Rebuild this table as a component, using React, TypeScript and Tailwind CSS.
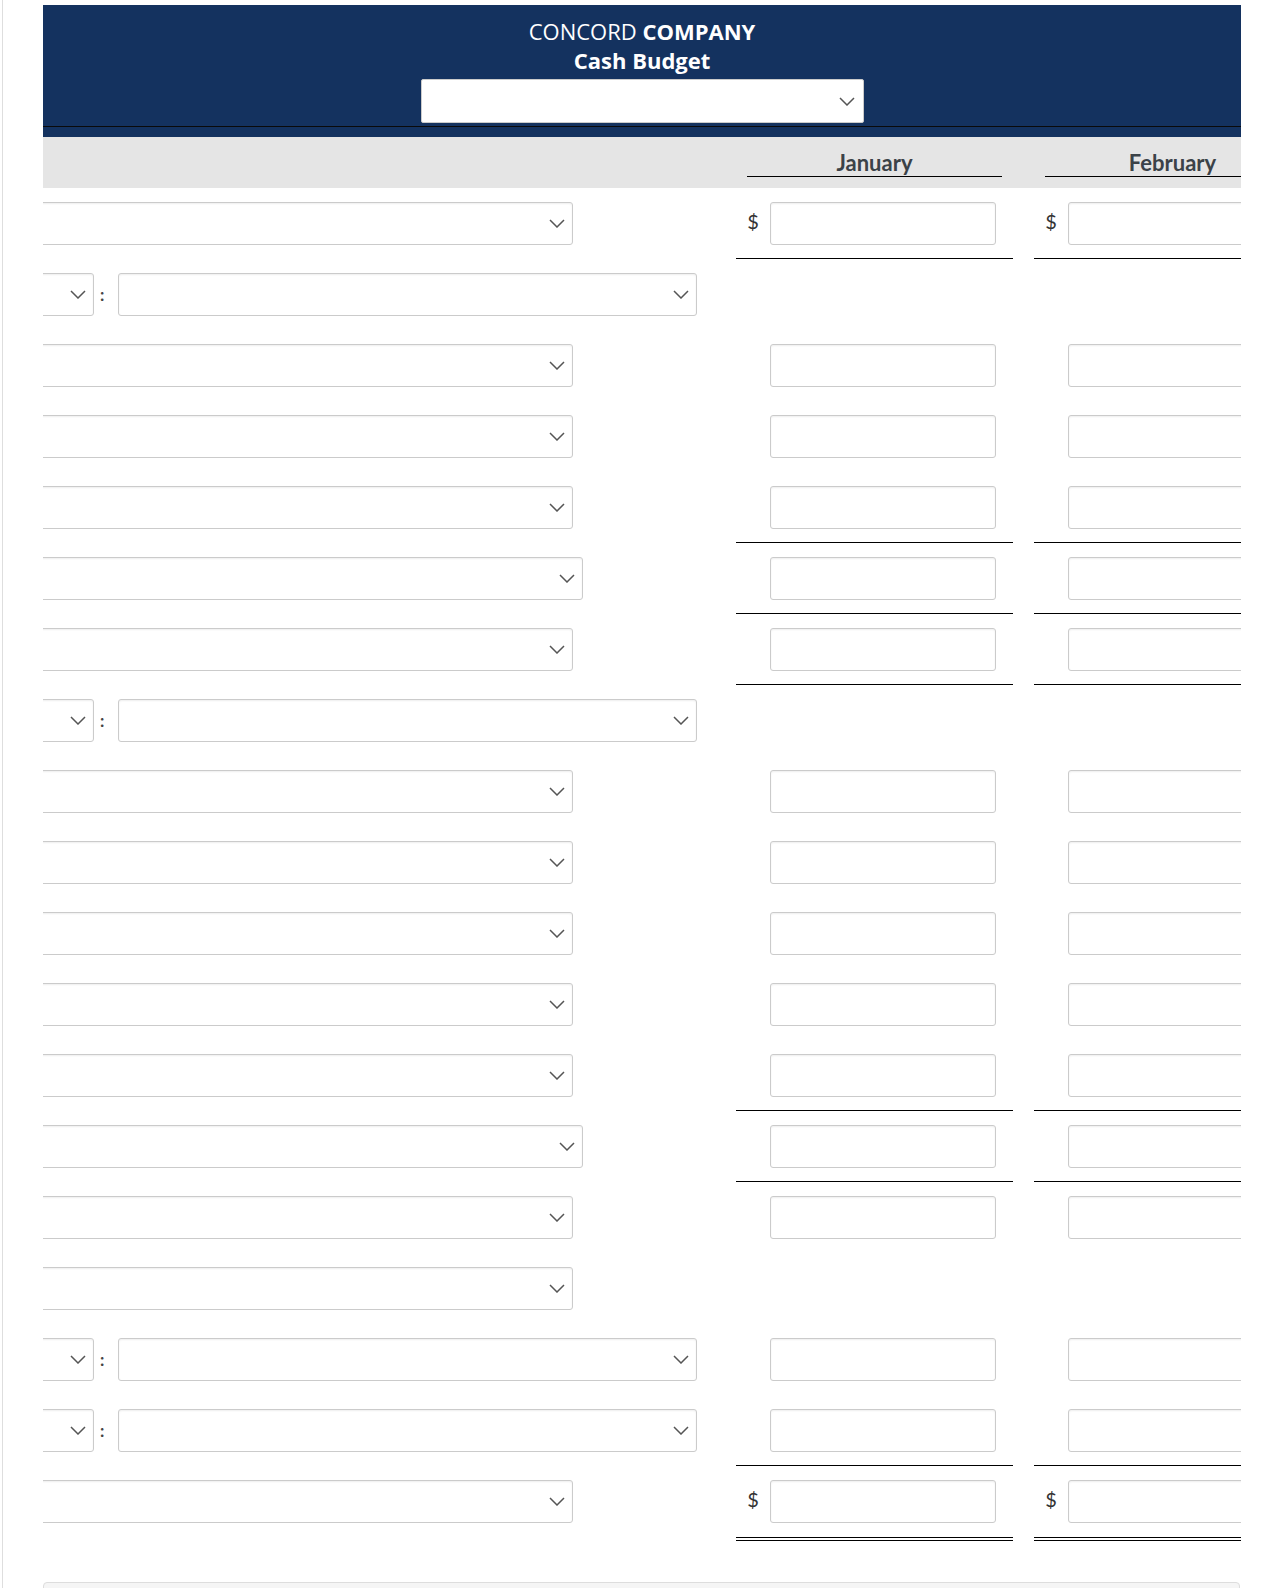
import React from 'react';

type Left = 'sel' | 'wide' | 'pair';
type Vals = 'none' | 'input' | 'dollar';
type Line = 'none' | 'single' | 'double';

interface Row {
  left: Left;
  vals: Vals;
  line: Line;
}

const rows: Row[] = [
  { left: 'sel', vals: 'dollar', line: 'single' },
  { left: 'pair', vals: 'none', line: 'none' },
  { left: 'sel', vals: 'input', line: 'none' },
  { left: 'sel', vals: 'input', line: 'none' },
  { left: 'sel', vals: 'input', line: 'single' },
  { left: 'wide', vals: 'input', line: 'single' },
  { left: 'sel', vals: 'input', line: 'single' },
  { left: 'pair', vals: 'none', line: 'none' },
  { left: 'sel', vals: 'input', line: 'none' },
  { left: 'sel', vals: 'input', line: 'none' },
  { left: 'sel', vals: 'input', line: 'none' },
  { left: 'sel', vals: 'input', line: 'none' },
  { left: 'sel', vals: 'input', line: 'single' },
  { left: 'wide', vals: 'input', line: 'single' },
  { left: 'sel', vals: 'input', line: 'none' },
  { left: 'sel', vals: 'none', line: 'none' },
  { left: 'pair', vals: 'input', line: 'none' },
  { left: 'pair', vals: 'input', line: 'single' },
  { left: 'sel', vals: 'dollar', line: 'double' },
];

function Chevron() {
  return (
    <svg width="16" height="9" viewBox="0 0 16 9" fill="none">
      <path d="M1 1l7 7 7-7" stroke="#555" strokeWidth="1.5" />
    </svg>
  );
}

function Select({ className }: { className: string }) {
  return (
    <div
      className={
        'flex h-[43px] shrink-0 items-center justify-end rounded-[3px] border border-[#cbcbcb] bg-white pr-[7px] shadow-[inset_0_1px_2px_rgba(0,0,0,0.07)] ' +
        className
      }
    >
      <Chevron />
    </div>
  );
}

function ValueCell({ vals, line }: { vals: Vals; line: Line }) {
  const border =
    line === 'double'
      ? 'border-b-[4px] border-double border-black'
      : line === 'single'
        ? 'border-b border-black'
        : 'border-b border-transparent';
  return (
    <div className={'flex h-full w-[277px] shrink-0 items-center ' + border}>
      <span className="w-[34px] pb-[5px] text-center text-[20px] text-[#333]">{vals === 'dollar' ? '$' : ''}</span>
      {vals !== 'none' && (
        <div className="h-[43px] w-[226px] rounded-[3px] border border-[#cbcbcb] bg-white shadow-[inset_0_1px_2px_rgba(0,0,0,0.07)]" />
      )}
    </div>
  );
}

function BudgetRow({ row }: { row: Row }) {
  return (
    <div className={'flex items-center ' + (row.line === 'double' ? 'h-[75px]' : 'h-[71px]')}>
      <div className="flex w-[693px] shrink-0 items-center self-start pt-[14px]">
        {row.left === 'pair' ? (
          <>
            <Select className="-ml-[20px] w-[71px]" />
            <span className="w-[24px] pl-[6px] text-[17px] font-bold text-[#444]">:</span>
            <Select className="w-[579px]" />
          </>
        ) : (
          <Select className={row.left === 'wide' ? '-ml-[20px] w-[560px]' : '-ml-[20px] w-[550px]'} />
        )}
      </div>
      <ValueCell vals={row.vals} line={row.line} />
      <div className="w-[21px] shrink-0" />
      <ValueCell vals={row.vals} line={row.line} />
    </div>
  );
}

export default function App() {
  return (
    <div className="min-h-[1588px] bg-white font-['Lato',sans-serif]">
      <div className="ml-[2px] min-h-[1588px] border-l border-[#dedede] pl-[40px] pt-[5px]">
        <div className="w-[1198px] overflow-hidden">
          <div className="bg-[#14325f]">
            <div className="flex flex-col items-center pt-[12px] font-['Open_Sans',sans-serif] text-white">
              <div className="text-[22px] leading-[29px]">
                CONCORD <span className="font-bold">COMPANY</span>
              </div>
              <div className="text-[22px] font-bold leading-[29px]">Cash Budget</div>
              <div className="mt-[4px] flex h-[44px] w-[443px] items-center justify-end rounded-[2px] border border-[#cbcbcb] bg-white pr-[8px]">
                <Chevron />
              </div>
            </div>
            <div className="mt-[3px] h-[1px] bg-[#0a0a0a]" />
            <div className="h-[10px]" />
          </div>

          <div className="flex h-[51px] items-end bg-[#e5e5e5] pb-[11px]">
            <div className="w-[693px] shrink-0" />
            <div className="w-[277px] shrink-0 px-[11px]">
              <div className="border-b border-black text-center text-[22px] font-bold leading-[26px] text-[#3b4248]">January</div>
            </div>
            <div className="w-[21px] shrink-0" />
            <div className="w-[277px] shrink-0 px-[11px]">
              <div className="border-b border-black text-center text-[22px] font-bold leading-[26px] text-[#3b4248]">February</div>
            </div>
          </div>

          {rows.map((r, i) => (
            <BudgetRow key={i} row={r} />
          ))}
        </div>
        <div className="mt-[41px] h-[40px] w-[1197px] rounded-t-[4px] border border-[#dddddd] bg-[#f5f5f5]" />
      </div>
    </div>
  );
}
